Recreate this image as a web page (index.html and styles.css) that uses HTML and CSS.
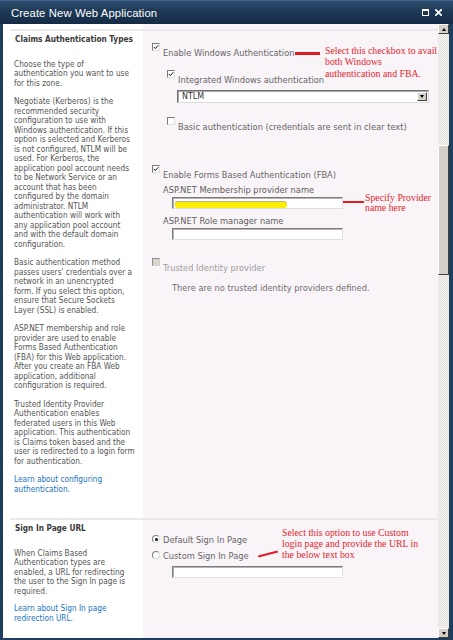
FILE: index.html
```html
<!DOCTYPE html>
<html>
<head>
<meta charset="utf-8">
<title>Create New Web Application</title>
<link rel="stylesheet" href="styles.css">
</head>
<body>
<div class="window">
  <div class="titlebar">
    <span class="title">Create New Web Application</span>
    <span class="tb-icons">
      <svg class="tb-icon" width="7" height="7" viewBox="0 0 7 7"><rect x="0.5" y="0.5" width="6" height="6" fill="none" stroke="#fff" stroke-width="1"/><rect x="0" y="0" width="7" height="2" fill="#fff"/></svg>
      <svg class="tb-icon" width="7" height="7" viewBox="0 0 7 7"><path d="M0.8 0.8 L6.2 6.2 M6.2 0.8 L0.8 6.2" stroke="#fff" stroke-width="1.8" stroke-linecap="square"/></svg>
    </span>
  </div>
  <div class="frame">
    <div class="content">
      <div class="section s1">
        <div class="left">
          <h2>Claims Authentication Types</h2>
          <p class="first">Choose the type of<br>authentication you want to use<br>for this zone.</p>
          <p>Negotiate (Kerberos) is the<br>recommended security<br>configuration to use with<br>Windows authentication. If this<br>option is selected and Kerberos<br>is not configured, NTLM will be<br>used. For Kerberos, the<br>application pool account needs<br>to be Network Service or an<br>account that has been<br>configured by the domain<br>administrator. NTLM<br>authentication will work with<br>any application pool account<br>and with the default domain<br>configuration.</p>
          <p>Basic authentication method<br>passes users' credentials over a<br>network in an unencrypted<br>form. If you select this option,<br>ensure that Secure Sockets<br>Layer (SSL) is enabled.</p>
          <p>ASP.NET membership and role<br>provider are used to enable<br>Forms Based Authentication<br>(FBA) for this Web application.<br>After you create an FBA Web<br>application, additional<br>configuration is required.</p>
          <p>Trusted Identity Provider<br>Authentication enables<br>federated users in this Web<br>application. This authentication<br>is Claims token based and the<br>user is redirected to a login form<br>for authentication.</p>
          <p><a class="link">Learn about configuring<br>authentication.</a></p>
        </div>
        <div class="right">
          <div class="opt o1">
            <span class="cb"><svg width="6" height="6" viewBox="0 0 6 6"><path d="M0.8 3 L2.3 4.6 L5.3 1.2" fill="none" stroke="#111" stroke-width="1"/></svg></span>
            <span class="lbl">Enable Windows Authentication</span>
          </div>
          <div class="opt o2 nested">
            <span class="cb"><svg width="6" height="6" viewBox="0 0 6 6"><path d="M0.8 3 L2.3 4.6 L5.3 1.2" fill="none" stroke="#111" stroke-width="1"/></svg></span>
            <span class="lbl">Integrated Windows authentication</span>
          </div>
          <div class="select">
            <span>NTLM</span>
            <span class="sel-btn"><span class="tri-down"></span></span>
          </div>
          <div class="opt o3 nested">
            <span class="cb"></span>
            <span class="lbl">Basic authentication (credentials are sent in clear text)</span>
          </div>
          <div class="opt o4">
            <span class="cb"><svg width="6" height="6" viewBox="0 0 6 6"><path d="M0.8 3 L2.3 4.6 L5.3 1.2" fill="none" stroke="#111" stroke-width="1"/></svg></span>
            <span class="lbl">Enable Forms Based Authentication (FBA)</span>
          </div>
          <div class="field-label fl1">ASP.NET Membership provider name</div>
          <div class="txt t1"><span class="scribble"></span></div>
          <div class="field-label fl2">ASP.NET Role manager name</div>
          <div class="txt t2"></div>
          <div class="opt o5 disabled">
            <span class="cb cb-off"></span>
            <span class="lbl">Trusted Identity provider</span>
          </div>
          <div class="none-text">There are no trusted identity providers defined.</div>

          <span class="note-line nl1"></span>
          <div class="note n1">Select this checkbox to avail<br>both Windows<br>authentication and FBA.</div>
          <span class="note-line nl2"></span>
          <div class="note n2">Specify Provider<br>name here</div>
        </div>
      </div>
      <div class="section s2">
        <div class="left">
          <h2>Sign In Page URL</h2>
          <p class="first">When Claims Based<br>Authentication types are<br>enabled, a URL for redirecting<br>the user to the Sign In page is<br>required.</p>
          <p class="linkp"><a class="link">Learn about Sign In page<br>redirection URL.</a></p>
        </div>
        <div class="right">
          <div class="opt r1">
            <span class="radio on"></span>
            <span class="lbl">Default Sign In Page</span>
          </div>
          <div class="opt r2">
            <span class="radio"></span>
            <span class="lbl">Custom Sign In Page</span>
          </div>
          <div class="txt t3"></div>

          <span class="note-line nl3"></span>
          <div class="note n3">Select this option to use Custom<br>login page and provide the URL in<br>the below text box</div>
        </div>
      </div>
    </div>
    <div class="scrollbar">
      <div class="sb-btn"><span class="tri-up"></span></div>
      <div class="sb-track"><div class="sb-thumb"></div></div>
      <div class="sb-btn"><span class="tri-down"></span></div>
    </div>
  </div>
</div>
</body>
</html>
```

FILE: styles.css
```css
html, body {
  margin: 0;
  padding: 0;
}
body {
  width: 453px;
  height: 640px;
  overflow: hidden;
  background: #1c3a59;
}
.window {
  width: 453px;
  height: 640px;
  display: flex;
  flex-direction: column;
  background: #1f3e5e;
}

/* title bar */
.titlebar {
  flex: none;
  height: 24px;
  box-sizing: border-box;
  border-top: 1px solid #40648c;
  padding: 0 11px;
  display: flex;
  align-items: center;
  justify-content: space-between;
  background: linear-gradient(#2d4b6c 0%, #1e3956 45%, #142b45 100%);
}
.title {
  color: #fff;
  font: 11.3px/14px "Liberation Sans", Arial, sans-serif;
  letter-spacing: 0.1px;
}
.tb-icons {
  display: flex;
  gap: 6px;
  align-items: center;
}
.tb-icon {
  display: block;
}

/* frame */
.frame {
  flex: 1;
  min-height: 0;
  display: flex;
  padding: 0 4px 2px 3px;
}
.content {
  flex: 1;
  overflow: hidden;
  position: relative;
  background: linear-gradient(to right, #ffffff 140px, #f8f4f8 140px);
}

/* sections */
.section {
  display: flex;
  margin-left: 7px;
  border-top: 2px solid #ebe8eb;
}
.s1 {
  margin-top: 5px;
  height: 487px;
}
.s2 {
  height: 200px;
}

.left {
  flex: none;
  width: 133px;
  box-sizing: border-box;
  padding: 3.5px 0 0 4px;
  font: 8.2px/9.5px "DejaVu Sans Condensed", "Liberation Sans", sans-serif;
  color: #555;
  white-space: nowrap;
}
.left h2 {
  margin: 0 0 0 1px;
  font: bold 8.2px/9.5px "DejaVu Sans Condensed", "Liberation Sans", sans-serif;
  color: #3a3a3a;
}
.left p {
  margin: 9px 0 0;
}
.left p.first {
  margin-top: 15.5px;
}
.left p.linkp {
  margin-top: 8px;
}
.link {
  color: #1a73c4;
}

/* right column */
.right {
  flex: 1;
  position: relative;
  padding-left: 9px;
  font: 8.3px/10px "DejaVu Sans", Verdana, sans-serif;
  color: #666;
  white-space: nowrap;
}
.opt {
  display: flex;
  align-items: flex-start;
}
.opt .lbl {
  margin-top: 5px;
}
.nested {
  margin-left: 15px;
}
.cb {
  flex: none;
  width: 8px;
  height: 8px;
  box-sizing: border-box;
  margin-right: 3px;
  border: 1px solid;
  border-color: #7b7b7b #e2e2e2 #e2e2e2 #7b7b7b;
  background: #fff;
  display: flex;
  align-items: center;
  justify-content: center;
}
.cb svg {
  display: block;
}
.cb-off {
  background: #d9d6d0;
  border-color: #8c8c8c #cfcfcf #cfcfcf #8c8c8c;
}
.disabled .lbl {
  color: #9e9e9e;
}
.o1 { margin-top: 12px; }
.o2 { margin-top: 12px; }
.o3 { margin-top: 14px; }
.o4 { margin-top: 33px; }
.o5 { margin-top: 18px; }

.select {
  margin: 5px 0 0 25px;
  width: 252px;
  height: 13px;
  box-sizing: border-box;
  border: 1px solid;
  border-color: #6f6f6f #dcdcdc #dcdcdc #6f6f6f;
  box-shadow: inset 1px 1px 0 #a8a8a8;
  background: #fff;
  padding: 0 1px 0 4px;
  display: flex;
  align-items: center;
  justify-content: space-between;
  color: #333;
  font-size: 8px;
}
.sel-btn {
  width: 10px;
  height: 9px;
  box-sizing: border-box;
  background: #d4d0c8;
  border: 1px solid;
  border-color: #fff #404040 #404040 #fff;
  display: flex;
  align-items: center;
  justify-content: center;
}

.field-label {
  margin-left: 11px;
  color: #5e5e5e;
}
.fl1 { margin-top: 5px; }
.fl2 { margin-top: 6.5px; }

.txt {
  position: relative;
  margin-left: 20px;
  width: 171px;
  height: 12px;
  box-sizing: border-box;
  border: 1px solid;
  border-color: #7b7b7b #e0e0e0 #e0e0e0 #7b7b7b;
  box-shadow: inset 1px 1px 0 #b4b4b4;
  background: #fff;
}
.t1 { margin-top: 2px; }
.t2 { margin-top: 2.5px; }
.t3 { margin-top: 5px; }

.scribble {
  position: absolute;
  left: 2px;
  top: 3.5px;
  width: 112px;
  height: 6px;
  border-radius: 3px 4px 4px 3px;
  background: #ffee00;
  box-shadow: 0 -1px 0 #b8b080;
}

.none-text {
  margin: 10px 0 0 20px;
  color: #707070;
}

/* radios */
.r1 { margin-top: 15px; }
.r2 { margin-top: 6px; }
.r1 .lbl, .r2 .lbl {
  margin-top: 0;
}
.radio {
  flex: none;
  width: 8px;
  height: 8px;
  box-sizing: border-box;
  margin-right: 3px;
  border-radius: 50%;
  border: 1px solid;
  border-color: #7b7b7b #dedede #dedede #7b7b7b;
  background: #fff;
  display: flex;
  align-items: center;
  justify-content: center;
}
.radio.on::after {
  content: "";
  width: 3px;
  height: 3px;
  border-radius: 50%;
  background: #111;
}

/* annotations (drawn over the screenshot) */
.note {
  position: absolute;
  font: 9.8px/11.3px "Liberation Serif", "Times New Roman", serif;
  color: #e3242b;
  white-space: nowrap;
}
.note-line {
  position: absolute;
  background: #e01b22;
}
.nl1 { left: 152px; top: 21px; width: 25px; height: 2.5px; }
.n1 { left: 182px; top: 14px; }
.nl2 { left: 200px; top: 170px; width: 21px; height: 1.5px; }
.n2 { left: 222px; top: 162.3px; line-height: 10px; }
.nl3 { left: 114.5px; top: 33.4px; width: 20px; height: 2px; transform: rotate(-14deg); }
.n3 { left: 139px; top: 7.9px; line-height: 10.85px; }

/* scrollbar */
.scrollbar {
  flex: none;
  width: 11px;
  display: flex;
  flex-direction: column;
  background: repeating-conic-gradient(#f5f4f1 0 25%, #e3e1db 0 50%) 0 0 / 2px 2px;
}
.sb-btn {
  flex: none;
  height: 10px;
  box-sizing: border-box;
  background: #d4d0c8;
  border: 1px solid;
  border-color: #fff #404040 #404040 #fff;
  display: flex;
  align-items: center;
  justify-content: center;
}
.sb-track {
  flex: 1;
}
.sb-thumb {
  margin-top: 111px;
  height: 130px;
  box-sizing: border-box;
  background: #d4d0c8;
  border: 1px solid;
  border-color: #fff #404040 #404040 #fff;
}
.tri-up {
  width: 0;
  height: 0;
  border-left: 2.5px solid transparent;
  border-right: 2.5px solid transparent;
  border-bottom: 3px solid #000;
}
.tri-down {
  width: 0;
  height: 0;
  border-left: 2.5px solid transparent;
  border-right: 2.5px solid transparent;
  border-top: 3px solid #000;
}
```
